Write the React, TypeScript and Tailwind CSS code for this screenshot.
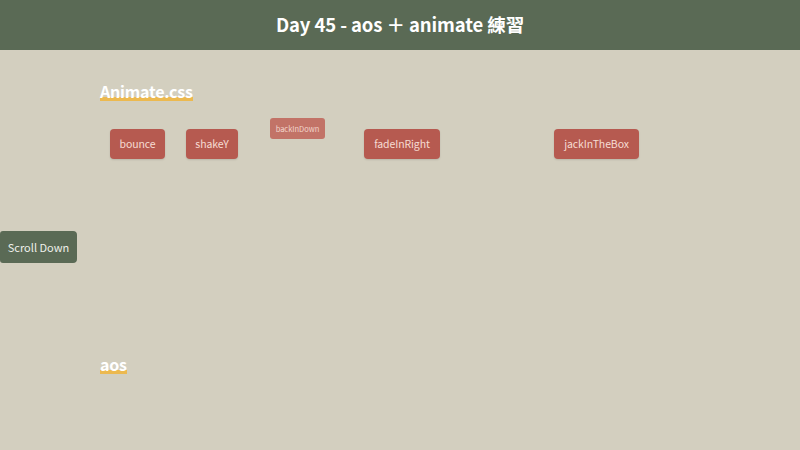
import React from 'react';

const font = { fontFamily: '"Noto Sans CJK TC", "Noto Sans", sans-serif' };

function AnimBtn({ label, className = '' }: { label: string; className?: string }) {
  return (
    <button
      className={`h-[30px] rounded-[4px] bg-[#b65a50] text-[#f6dcd3] text-[10.5px] leading-none tracking-[-0.1px] shadow-[0_1px_2px_rgba(0,0,0,0.12)] ${className}`}
    >
      {label}
    </button>
  );
}

function Heading({ children }: { children: React.ReactNode }) {
  return (
    <h2 className="w-fit text-white text-[16px] font-bold leading-[19px] tracking-[-0.2px] shadow-[inset_0_-4px_0_#ecb94f]">
      {children}
    </h2>
  );
}

export default function App() {
  return (
    <div className="w-[800px] h-[450px] overflow-hidden bg-[#d3cfbf] flex flex-col" style={font}>
      {/* header */}
      <header className="h-[50px] shrink-0 bg-[#5a6a55] flex items-center justify-center">
        <h1 className="text-white text-[18.5px] font-bold tracking-[-0.1px]">Day 45 - aos ＋ animate 練習</h1>
      </header>

      <main className="flex-1 flex flex-col">
        <section className="pl-[100px] pt-[32px]">
          <Heading>Animate.css</Heading>

          <div className="flex items-start mt-[28px] pl-[10px]">
            <AnimBtn label="bounce" className="w-[55px]" />
            <AnimBtn label="shakeY" className="ml-[21px] w-[52px]" />
            <button className="ml-[32px] -mt-[11px] h-[21px] w-[55px] rounded-[3px] bg-[#c27367] text-[#f3d6cd] text-[7.5px] leading-none">
              backInDown
            </button>
            <AnimBtn label="fadeInRight" className="ml-[39px] w-[76px]" />
            <AnimBtn label="jackInTheBox" className="ml-[114px] w-[85px]" />
          </div>
        </section>

        <div className="mt-[72px]">
          <button className="h-[32px] w-[77px] rounded-r-[4px] rounded-l-[3px] bg-[#5a6a55] text-[#eef0ea] text-[11px] leading-none">
            Scroll Down
          </button>
        </div>

        <section className="pl-[100px] mt-[92px]">
          <Heading>aos</Heading>
        </section>
      </main>
    </div>
  );
}
